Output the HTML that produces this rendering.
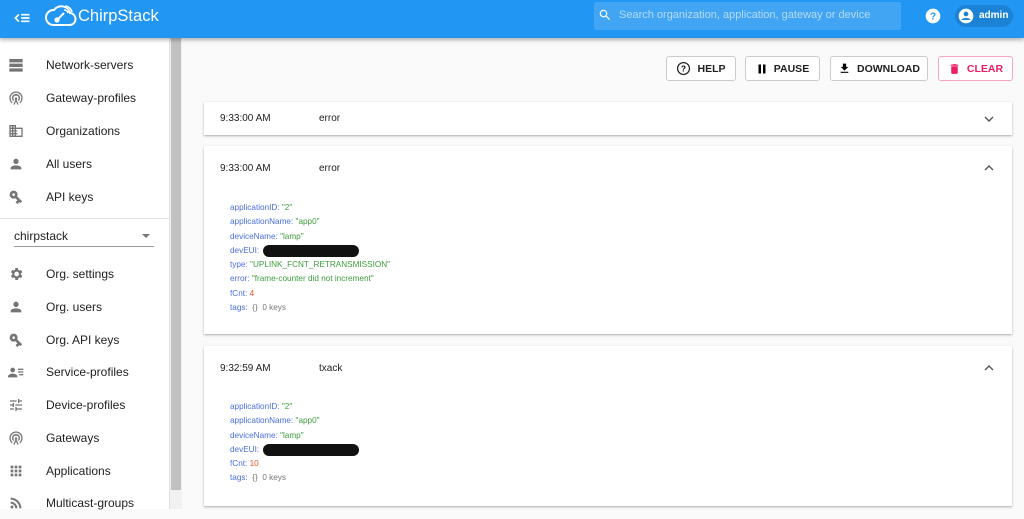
<!DOCTYPE html>
<html><head><meta charset="utf-8"><style>
*{box-sizing:border-box;margin:0;padding:0}
body{width:1024px;height:509px;overflow:hidden;font-family:"Liberation Sans",Roboto,sans-serif;background:#fafafa;position:relative;font-size:14px;color:#212121}
.hdr{position:absolute;left:0;top:0;width:1024px;height:38px;background:#2196f3;box-shadow:0 2px 4px rgba(0,0,0,.3);z-index:2}
.side{position:absolute;left:0;top:38px;width:170px;height:471px;background:#fff;border-right:1px solid #e0e0e0}
.sb{position:absolute;left:170px;top:38px;width:12px;height:471px;background:#f1f1f1}
.sb div{position:absolute;left:1px;top:0;width:10px;height:452px;background:#c1c1c1}
.it{position:absolute;left:0;height:33px;width:170px;display:flex;align-items:center;font-size:12px;color:#212121}
.it svg{position:absolute;left:8px;width:16px;height:16px;fill:#757575}
.it span{position:absolute;left:46px}
.btn{position:absolute;top:56px;height:25px;border:1px solid #ccc;border-radius:3px;background:#fff;font-size:10.5px;font-weight:bold;display:flex;align-items:center;justify-content:center;gap:6px;color:#212121}
.card{position:absolute;left:204px;width:808px;background:#fff;box-shadow:0 1px 3px rgba(0,0,0,.2),0 1px 1px rgba(0,0,0,.14)}
.t{position:absolute;left:16px;font-size:10px}
.ty{position:absolute;left:115px;font-size:10px}
.chev{position:absolute;right:18px;width:10px;height:10px}
.kv{position:absolute;left:26px;font-size:8.2px;line-height:14.3px;color:#4a6ee0}
.s{color:#3c9d3c}.n{color:#e8572a}.g{color:#777}
.red{display:inline-block;width:96px;height:12px;background:#111;border-radius:6px;vertical-align:middle;margin-left:4px}
</style></head><body>
<div class="hdr">
<svg style="position:absolute;left:12px;top:8px" width="20" height="20" viewBox="0 0 24 24" fill="#fff"><path d="M9 8.4L5.4 12 9 15.6 7.6 17l-5-5 5-5zM11 7h10v2H11zM11 11h10v2H11zM11 15h10v2H11z"/></svg>
<svg style="position:absolute;left:44px;top:3px" width="34" height="26" viewBox="0 0 34 26" fill="none" stroke="#fff" stroke-width="2"><path d="M9 22h16a6 6 0 0 0 1-12 9 9 0 0 0-16-3A7.5 7.5 0 0 0 9 22z"/><circle cx="13" cy="17" r="1.6" fill="#fff"/><path d="M14 16l6-6"/><path d="M21 3a8 8 0 0 1 7 6M20 7a4 4 0 0 1 4 3" stroke-width="1.6"/></svg>
<div style="position:absolute;left:78px;top:7px;color:#fff;font-size:16.5px">ChirpStack</div>
<div style="position:absolute;left:594px;top:2px;width:307px;height:28px;background:rgba(255,255,255,.15);border-radius:2px"></div>
<svg style="position:absolute;left:598px;top:8px" width="14" height="14" viewBox="0 0 24 24" fill="#fff"><path d="M15.5 14h-.8l-.3-.3A6.5 6.5 0 1 0 9.5 16a6.5 6.5 0 0 0 4.2-1.6l.3.3v.8l5 5 1.5-1.5-5-5zm-6 0a4.5 4.5 0 1 1 0-9 4.5 4.5 0 0 1 0 9z"/></svg>
<div style="position:absolute;left:619px;top:9px;font-size:11px;color:rgba(255,255,255,.6)">Search organization, application, gateway or device</div>
<svg style="position:absolute;left:925px;top:8px" width="16" height="16" viewBox="0 0 24 24"><circle cx="12" cy="12" r="11" fill="#fff"/><text x="12" y="17" text-anchor="middle" font-size="15" font-weight="bold" fill="#2196f3" font-family="Liberation Sans">?</text></svg>
<div style="position:absolute;left:955px;top:5px;width:58px;height:22px;background:#1b82d6;border-radius:11px"></div>
<svg style="position:absolute;left:958px;top:8px" width="16" height="16" viewBox="0 0 24 24"><circle cx="12" cy="12" r="11" fill="#fff"/><circle cx="12" cy="9" r="3.5" fill="#1b82d6"/><path d="M5 18c2-4 12-4 14 0" fill="#1b82d6"/></svg>
<div style="position:absolute;left:979px;top:10px;color:#fff;font-size:10px;font-weight:bold">admin</div>
</div>

<div class="side">
<div class="it" style="top:10px"><svg viewBox="0 0 24 24"><path d="M2 3h20v5H2zM2 10h20v5H2zM2 17h20v5H2z"/></svg><span>Network-servers</span></div>
<div class="it" style="top:43px"><svg viewBox="0 0 24 24"><path d="M12 11a2 2 0 0 0-1 3.7L8 22h2l2-5 2 5h2l-3-7.3A2 2 0 0 0 12 11zm0-5a6 6 0 0 0-4 10.5l1-1.5A4 4 0 1 1 15 15l1 1.5A6 6 0 0 0 12 6zm0-4a10 10 0 0 0-6 18l1-1.6a8 8 0 1 1 10 0l1 1.6A10 10 0 0 0 12 2z"/></svg><span>Gateway-profiles</span></div>
<div class="it" style="top:76px"><svg viewBox="0 0 24 24"><path d="M12 7V3H2v18h20V7H12zM6 19H4v-2h2v2zm0-4H4v-2h2v2zm0-4H4V9h2v2zm0-4H4V5h2v2zm4 12H8v-2h2v2zm0-4H8v-2h2v2zm0-4H8V9h2v2zm0-4H8V5h2v2zm10 12h-8v-2h2v-2h-2v-2h2v-2h-2V9h8v10z"/></svg><span>Organizations</span></div>
<div class="it" style="top:109px"><svg viewBox="0 0 24 24"><path d="M12 12a4 4 0 1 0 0-8 4 4 0 0 0 0 8zm0 2c-2.7 0-8 1.3-8 4v2h16v-2c0-2.7-5.3-4-8-4z"/></svg><span>All users</span></div>
<div class="it" style="top:142px"><svg viewBox="0 0 24 24"><path d="M12.65 10C11.83 7.67 9.61 6 7 6c-3.31 0-6 2.69-6 6s2.690 6 6 6c2.61 0 4.83-1.67 5.65-4H17v4h4v-4h2v-4H12.65zM7 14c-1.1 0-2-.9-2-2s.9-2 2-2 2 .9 2 2-.9 2-2 2z" transform="rotate(45 12 12)"/></svg><span>API keys</span></div>
<div style="position:absolute;left:0;top:180px;width:170px;height:1px;background:#e0e0e0"></div>
<div style="position:absolute;left:14px;top:191px;font-size:12px">chirpstack</div>
<div style="position:absolute;left:142px;top:196px;border:4px solid transparent;border-top:4px solid #757575"></div>
<div style="position:absolute;left:14px;top:208px;width:140px;height:1px;background:#999"></div>
<div class="it" style="top:219px"><svg viewBox="0 0 24 24"><path d="M19.4 13a7.5 7.5 0 0 0 0-2l2.1-1.6-2-3.5-2.5 1a7 7 0 0 0-1.7-1L15 3h-4l-.4 2.9a7 7 0 0 0-1.7 1l-2.5-1-2 3.5L6.6 11a7.5 7.5 0 0 0 0 2l-2.1 1.6 2 3.5 2.5-1a7 7 0 0 0 1.7 1L11 21h4l.4-2.9a7 7 0 0 0 1.7-1l2.5 1 2-3.5zM13 15.5a3.5 3.5 0 1 1 0-7 3.5 3.5 0 0 1 0 7z"/></svg><span>Org. settings</span></div>
<div class="it" style="top:252px"><svg viewBox="0 0 24 24"><path d="M12 12a4 4 0 1 0 0-8 4 4 0 0 0 0 8zm0 2c-2.7 0-8 1.3-8 4v2h16v-2c0-2.7-5.3-4-8-4z"/></svg><span>Org. users</span></div>
<div class="it" style="top:285px"><svg viewBox="0 0 24 24"><path d="M12.65 10C11.83 7.67 9.61 6 7 6c-3.31 0-6 2.69-6 6s2.69 6 6 6c2.61 0 4.83-1.67 5.65-4H17v4h4v-4h2v-4H12.65zM7 14c-1.1 0-2-.9-2-2s.9-2 2-2 2 .9 2 2-.9 2-2 2z" transform="rotate(45 12 12)"/></svg><span>Org. API keys</span></div>
<div class="it" style="top:317px"><svg viewBox="0 0 24 24"><circle cx="7" cy="9" r="3.5"/><path d="M0 19c0-3 4-4.5 7-4.5s7 1.5 7 4.5v1H0zM15 7h8v2h-8zM15 11h8v2h-8zM17 15h6v2h-6z"/></svg><span>Service-profiles</span></div>
<div class="it" style="top:350px"><svg viewBox="0 0 24 24"><path d="M3 17v2h6v-2H3zM3 5v2h10V5H3zm10 16v-2h8v-2h-8v-2h-2v6h2zM7 9v2H3v2h4v2h2V9H7zm14 4v-2H11v2h10zm-6-4h2V7h4V5h-4V3h-2v6z"/></svg><span>Device-profiles</span></div>
<div class="it" style="top:383px"><svg viewBox="0 0 24 24"><path d="M12 11a2 2 0 0 0-1 3.7L8 22h2l2-5 2 5h2l-3-7.3A2 2 0 0 0 12 11zm0-5a6 6 0 0 0-4 10.5l1-1.5A4 4 0 1 1 15 15l1 1.5A6 6 0 0 0 12 6zm0-4a10 10 0 0 0-6 18l1-1.6a8 8 0 1 1 10 0l1 1.6A10 10 0 0 0 12 2z"/></svg><span>Gateways</span></div>
<div class="it" style="top:416px"><svg viewBox="0 0 24 24"><path d="M4 4h4v4H4zM10 4h4v4h-4zM16 4h4v4h-4zM4 10h4v4H4zM10 10h4v4h-4zM16 10h4v4h-4zM4 16h4v4H4zM10 16h4v4h-4zM16 16h4v4h-4z"/></svg><span>Applications</span></div>
<div class="it" style="top:448px"><svg viewBox="0 0 24 24"><circle cx="6" cy="18" r="2.2"/><path d="M4 4v3a13 13 0 0 1 13 13h3A16 16 0 0 0 4 4zm0 6v3a7 7 0 0 1 7 7h3A10 10 0 0 0 4 10z"/></svg><span>Multicast-groups</span></div>
</div>
<div class="sb"><div></div></div>

<div class="btn" style="left:666px;width:70px"><svg width="15" height="15" viewBox="0 0 24 24"><circle cx="12" cy="12" r="9.5" fill="none" stroke="#212121" stroke-width="2"/><text x="12" y="16.5" text-anchor="middle" font-size="13" font-weight="bold" font-family="Liberation Sans">?</text></svg>HELP</div>
<div class="btn" style="left:745px;width:75px"><svg width="12" height="12" viewBox="0 0 24 24"><path d="M5 3h5v18H5zM14 3h5v18h-5z"/></svg>PAUSE</div>
<div class="btn" style="left:830px;width:98px"><svg width="13" height="13" viewBox="0 0 24 24"><path d="M19 9h-4V3H9v6H5l7 7 7-7zM5 18v2h14v-2H5z"/></svg>DOWNLOAD</div>
<div class="btn" style="left:938px;width:75px;border-color:#f8a5c2;color:#e91e63"><svg width="13" height="14" viewBox="0 0 24 24" fill="#e91e63"><path d="M6 19a2 2 0 0 0 2 2h8a2 2 0 0 0 2-2V7H6v12zM19 4h-3.5l-1-1h-5l-1 1H5v2h14V4z"/></svg>CLEAR</div>

<div class="card" style="top:102px;height:33px">
<div class="t" style="top:11px">9:33:00 AM</div><div class="ty" style="top:11px">error</div>
<svg class="chev" style="top:12px" viewBox="0 0 10 10"><path d="M1 3l4 4 4-4" fill="none" stroke="#555" stroke-width="1.4"/></svg>
</div>

<div class="card" style="top:146px;height:188px">
<div class="t" style="top:17px">9:33:00 AM</div><div class="ty" style="top:17px">error</div>
<svg class="chev" style="top:17px" viewBox="0 0 10 10"><path d="M1 7l4-4 4 4" fill="none" stroke="#555" stroke-width="1.4"/></svg>
<div class="kv" style="top:55px">
applicationID: <span class="s">"2"</span><br>
applicationName: <span class="s">"app0"</span><br>
deviceName: <span class="s">"lamp"</span><br>
devEUI:<span class="red"></span><br>
type: <span class="s">"UPLINK_FCNT_RETRANSMISSION"</span><br>
error: <span class="s">"frame-counter did not increment"</span><br>
fCnt: <span class="n">4</span><br>
tags: <span class="g">&nbsp;{} &nbsp;0 keys</span>
</div>
</div>

<div class="card" style="top:346px;height:160px">
<div class="t" style="top:17px">9:32:59 AM</div><div class="ty" style="top:17px">txack</div>
<svg class="chev" style="top:17px" viewBox="0 0 10 10"><path d="M1 7l4-4 4 4" fill="none" stroke="#555" stroke-width="1.4"/></svg>
<div class="kv" style="top:54px">
applicationID: <span class="s">"2"</span><br>
applicationName: <span class="s">"app0"</span><br>
deviceName: <span class="s">"lamp"</span><br>
devEUI:<span class="red"></span><br>
fCnt: <span class="n">10</span><br>
tags: <span class="g">&nbsp;{} &nbsp;0 keys</span>
</div>
</div>
</body></html>
